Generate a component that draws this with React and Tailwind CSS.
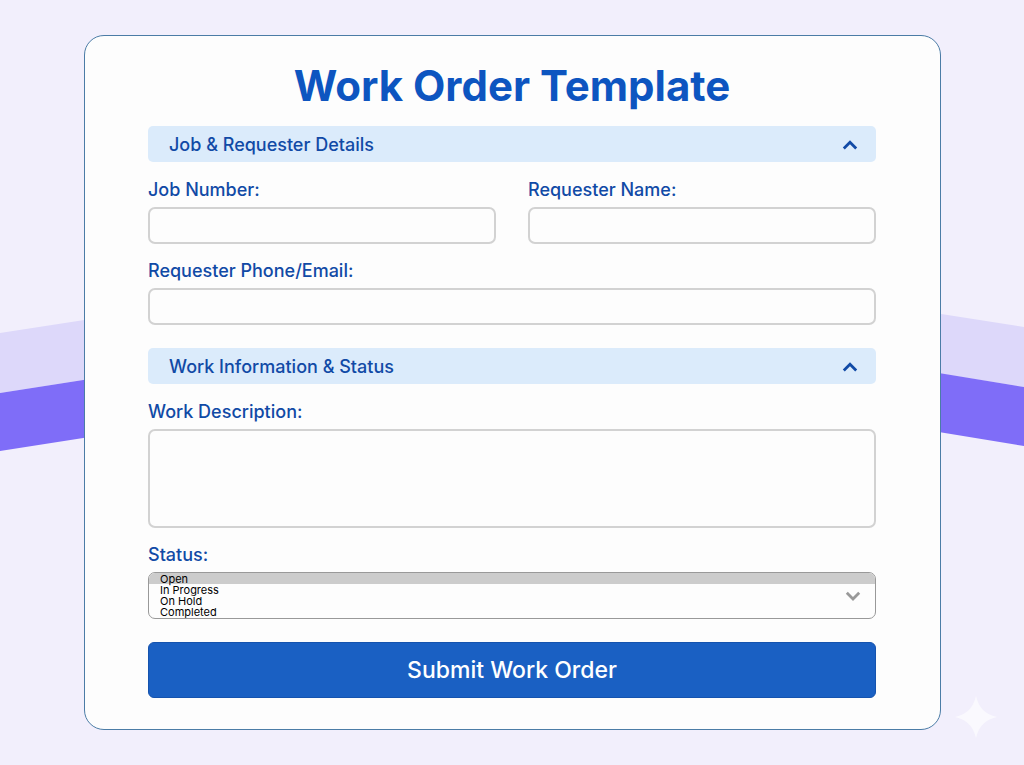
import React, { useState } from "react";

const labelClass = "text-lg leading-[26px] font-medium text-[#114aa6]";
const boxClass =
  "w-full rounded-[7px] border-2 border-[#d2d2d2] bg-[#fdfdfd] px-3 text-base text-gray-900 outline-none focus:border-[#1a5fc4]";

function Field({ id, label, children }) {
  return (
    <div className="flex flex-col gap-1">
      <label htmlFor={id} className={labelClass}>
        {label}
      </label>
      {children}
    </div>
  );
}

function Section({ title, children }) {
  const [open, setOpen] = useState(true);
  return (
    <section className="flex flex-col gap-[15px]">
      <h2>
        <button
          type="button"
          aria-expanded={open}
          onClick={() => setOpen(!open)}
          className="flex h-9 w-full items-center justify-between rounded-[5px] bg-[#dbebfb] pt-px pr-[18px] pl-[21px] text-lg font-medium text-[#114aa6]"
        >
          {title}
          <svg
            viewBox="0 0 16 12"
            className={open ? "h-3 w-4" : "h-3 w-4 rotate-180"}
            fill="none"
            stroke="currentColor"
            strokeWidth="2.8"
            aria-hidden="true"
          >
            <path d="M1.8 9.4 8 3.2l6.2 6.2" />
          </svg>
        </button>
      </h2>
      {open && <div className="flex flex-col gap-3.5">{children}</div>}
    </section>
  );
}

function Backdrop() {
  return (
    <svg
      className="absolute inset-0 h-full w-full"
      viewBox="0 0 1024 765"
      preserveAspectRatio="none"
      aria-hidden="true"
    >
      <path fill="#ddd8fa" d="M0 333 L512 254 V313 L0 393 Z M1024 327 L512 247 V306 L1024 387 Z" />
      <path fill="#7f6df8" d="M0 393 L512 313 V371 L0 451 Z M1024 387 L512 303 V362 L1024 446 Z" />
    </svg>
  );
}

export default function App() {
  return (
    <main className="relative min-h-screen bg-[#f2effc] py-[35px] pr-[83px] pl-[84px] font-['Inter',sans-serif]">
      <Backdrop />
      <form
        onSubmit={(e) => e.preventDefault()}
        className="relative rounded-[20px] border border-[#4b7ca6] bg-[#fdfdfd] pt-[22px] pr-16 pb-[31px] pl-[63px]"
      >
        <h1 className="text-center text-[42px] leading-[56px] font-bold text-[#0d55c0]">
          Work Order Template
        </h1>
        <div className="mt-3 flex flex-col gap-[23px]">
          <Section title="Job & Requester Details">
            <div className="grid grid-cols-2 gap-8">
              <Field id="job" label="Job Number:">
                <input id="job" type="text" className={`${boxClass} h-[37px]`} />
              </Field>
              <Field id="requester" label="Requester Name:">
                <input id="requester" type="text" className={`${boxClass} h-[37px]`} />
              </Field>
            </div>
            <Field id="contact" label="Requester Phone/Email:">
              <input id="contact" type="text" className={`${boxClass} h-[37px]`} />
            </Field>
          </Section>
          <Section title="Work Information & Status">
            <Field id="description" label="Work Description:">
              <textarea id="description" className={`${boxClass} block h-[99px] resize-none py-2`} />
            </Field>
            <Field id="status" label="Status:">
              <div className="relative">
                <select
                  id="status"
                  size={4}
                  defaultValue="Open"
                  className="block h-[47px] w-full overflow-hidden rounded-[7px] border border-[#999999] bg-[#fdfdfd] text-[11px] leading-[11px] text-black outline-none [scrollbar-width:none]"
                >
                  {["Open", "In Progress", "On Hold", "Completed"].map((s) => (
                    <option
                      key={s}
                      className="flex h-[11px] min-h-0 items-center py-0 pr-0 pl-[11px] text-[11px] leading-[11px] text-black checked:bg-[#cccccc]"
                    >
                      {s}
                    </option>
                  ))}
                </select>
                <svg
                  viewBox="0 0 16 12"
                  className="pointer-events-none absolute top-1/2 right-[15px] h-3 w-4 -translate-y-1/2"
                  fill="none"
                  stroke="#999999"
                  strokeWidth="2.8"
                  aria-hidden="true"
                >
                  <path d="M1.8 2.8 8 9l6.2-6.2" />
                </svg>
              </div>
            </Field>
          </Section>
          <button
            type="submit"
            className="h-14 w-full rounded-md border border-[#1553ae] bg-[#1a60c3] text-[23px] font-medium text-white"
          >
            Submit Work Order
          </button>
        </div>
      </form>
      <svg
        viewBox="0 0 42 42"
        className="absolute right-[27px] bottom-[27px] size-[42px]"
        fill="#faf9fe"
        aria-hidden="true"
      >
        <path d="M21 0C24 12 30 18 42 21 30 24 24 30 21 42 18 30 12 24 0 21 12 18 18 12 21 0Z" />
      </svg>
    </main>
  );
}
